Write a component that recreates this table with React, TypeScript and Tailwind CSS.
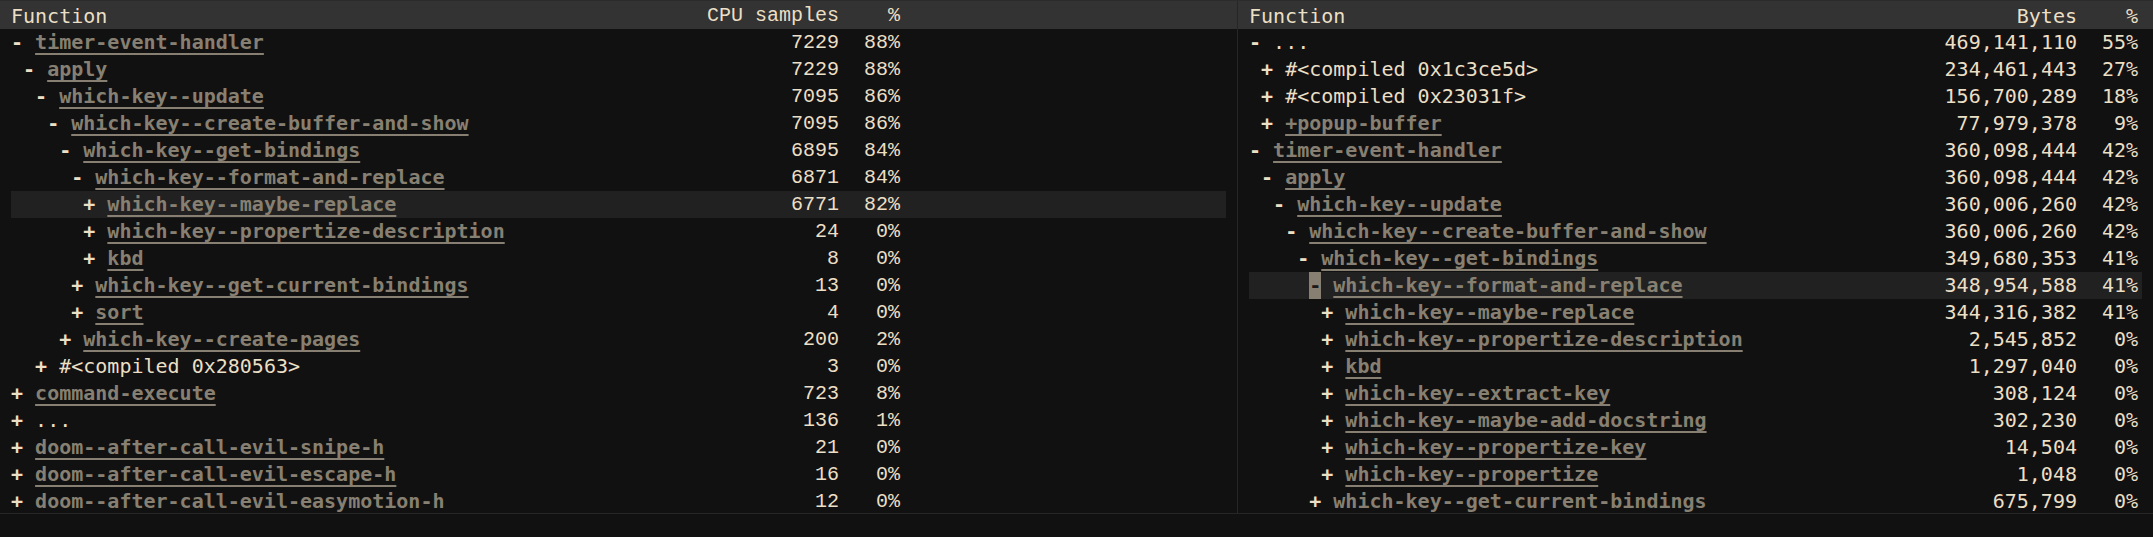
type Row = {
  depth: number;
  sign: string;
  name: string;
  kind: "link" | "plain" | "bold";
  value: string;
  pct: string;
  active?: boolean;
  cursor?: boolean;
};

const cpuRows: Row[] = [
  { depth: 0, sign: "-", name: "timer-event-handler", kind: "link", value: "7229", pct: "88%" },
  { depth: 1, sign: "-", name: "apply", kind: "link", value: "7229", pct: "88%" },
  { depth: 2, sign: "-", name: "which-key--update", kind: "link", value: "7095", pct: "86%" },
  { depth: 3, sign: "-", name: "which-key--create-buffer-and-show", kind: "link", value: "7095", pct: "86%" },
  { depth: 4, sign: "-", name: "which-key--get-bindings", kind: "link", value: "6895", pct: "84%" },
  { depth: 5, sign: "-", name: "which-key--format-and-replace", kind: "link", value: "6871", pct: "84%" },
  { depth: 6, sign: "+", name: "which-key--maybe-replace", kind: "link", value: "6771", pct: "82%", active: true },
  { depth: 6, sign: "+", name: "which-key--propertize-description", kind: "link", value: "24", pct: "0%" },
  { depth: 6, sign: "+", name: "kbd", kind: "link", value: "8", pct: "0%" },
  { depth: 5, sign: "+", name: "which-key--get-current-bindings", kind: "link", value: "13", pct: "0%" },
  { depth: 5, sign: "+", name: "sort", kind: "link", value: "4", pct: "0%" },
  { depth: 4, sign: "+", name: "which-key--create-pages", kind: "link", value: "200", pct: "2%" },
  { depth: 2, sign: "+", name: "#<compiled 0x280563>", kind: "plain", value: "3", pct: "0%" },
  { depth: 0, sign: "+", name: "command-execute", kind: "link", value: "723", pct: "8%" },
  { depth: 0, sign: "+", name: "...", kind: "plain", value: "136", pct: "1%" },
  { depth: 0, sign: "+", name: "doom--after-call-evil-snipe-h", kind: "link", value: "21", pct: "0%" },
  { depth: 0, sign: "+", name: "doom--after-call-evil-escape-h", kind: "link", value: "16", pct: "0%" },
  // last row: its underline falls under the window edge
  { depth: 0, sign: "+", name: "doom--after-call-evil-easymotion-h", kind: "bold", value: "12", pct: "0%" },
];

const memRows: Row[] = [
  { depth: 0, sign: "-", name: "...", kind: "plain", value: "469,141,110", pct: "55%" },
  { depth: 1, sign: "+", name: "#<compiled 0x1c3ce5d>", kind: "plain", value: "234,461,443", pct: "27%" },
  { depth: 1, sign: "+", name: "#<compiled 0x23031f>", kind: "plain", value: "156,700,289", pct: "18%" },
  { depth: 1, sign: "+", name: "+popup-buffer", kind: "link", value: "77,979,378", pct: "9%" },
  { depth: 0, sign: "-", name: "timer-event-handler", kind: "link", value: "360,098,444", pct: "42%" },
  { depth: 1, sign: "-", name: "apply", kind: "link", value: "360,098,444", pct: "42%" },
  { depth: 2, sign: "-", name: "which-key--update", kind: "link", value: "360,006,260", pct: "42%" },
  { depth: 3, sign: "-", name: "which-key--create-buffer-and-show", kind: "link", value: "360,006,260", pct: "42%" },
  { depth: 4, sign: "-", name: "which-key--get-bindings", kind: "link", value: "349,680,353", pct: "41%" },
  { depth: 5, sign: "-", name: "which-key--format-and-replace", kind: "link", value: "348,954,588", pct: "41%", active: true, cursor: true },
  { depth: 6, sign: "+", name: "which-key--maybe-replace", kind: "link", value: "344,316,382", pct: "41%" },
  { depth: 6, sign: "+", name: "which-key--propertize-description", kind: "link", value: "2,545,852", pct: "0%" },
  { depth: 6, sign: "+", name: "kbd", kind: "link", value: "1,297,040", pct: "0%" },
  { depth: 6, sign: "+", name: "which-key--extract-key", kind: "link", value: "308,124", pct: "0%" },
  { depth: 6, sign: "+", name: "which-key--maybe-add-docstring", kind: "link", value: "302,230", pct: "0%" },
  { depth: 6, sign: "+", name: "which-key--propertize-key", kind: "link", value: "14,504", pct: "0%" },
  { depth: 6, sign: "+", name: "which-key--propertize", kind: "link", value: "1,048", pct: "0%" },
  { depth: 5, sign: "+", name: "which-key--get-current-bindings", kind: "bold", value: "675,799", pct: "0%" },
];

function TreeRow({ row, narrow }: { row: Row; narrow: boolean }) {
  const numFont = narrow ? "font-['Liberation_Mono',monospace]" : "";
  return (
    <div
      className={`grid h-[27px] shrink-0 grid-cols-[688px_140px_61px_1fr] items-center leading-[27px] ${
        row.active ? "bg-[#212121]" : ""
      }`}
    >
      <div className="flex whitespace-pre">
        <span>{" ".repeat(row.depth)}</span>
        <span className={row.cursor ? "bg-[#878072] font-bold text-[#1a1a1a]" : "font-bold"}>{row.sign}</span>
        <span> </span>
        {row.kind === "plain" ? (
          <span>{row.name}</span>
        ) : (
          <span
            className={`font-bold text-[#878072] ${
              row.kind === "link" ? "underline decoration-[#878072] decoration-2 underline-offset-[4px]" : ""
            }`}
          >
            {row.name}
          </span>
        )}
      </div>
      <div className={`text-right ${numFont}`}>{row.value}</div>
      <div className={`text-right ${numFont}`}>{row.pct}</div>
      <div />
    </div>
  );
}

function Panel({ label, rows, narrow }: { label: string; rows: Row[]; narrow: boolean }) {
  const numFont = narrow ? "font-['Liberation_Mono',monospace]" : "";
  return (
    <div className="flex h-full flex-col overflow-hidden">
      <div className="grid h-[28px] shrink-0 grid-cols-[688px_140px_61px_1fr] bg-[#333333] px-[11px] pt-[2px] leading-[26px]">
        <div>Function</div>
        <div className={`text-right ${numFont}`}>{label}</div>
        <div className={`text-right ${numFont}`}>%</div>
        <div />
      </div>
      <div className="flex flex-col px-[11px]">
        {rows.map((r, i) => (
          <TreeRow key={i} row={r} narrow={narrow} />
        ))}
      </div>
    </div>
  );
}

export default function App() {
  return (
    <div className="flex h-[537px] w-[2153px] flex-col overflow-hidden bg-[#111111] font-['DejaVu_Sans_Mono',monospace] text-[20px] text-[#ebdfc5]">
      <div className="flex h-[514px] shrink-0 border-t border-b border-t-[#2c2c2c] border-b-[#262626]">
        <div className="w-[1238px] shrink-0 border-r border-[#262626]">
          <Panel label="CPU samples" rows={cpuRows} narrow />
        </div>
        <div className="flex-1">
          <Panel label="Bytes" rows={memRows} narrow={false} />
        </div>
      </div>
      <div className="flex-1" />
    </div>
  );
}
